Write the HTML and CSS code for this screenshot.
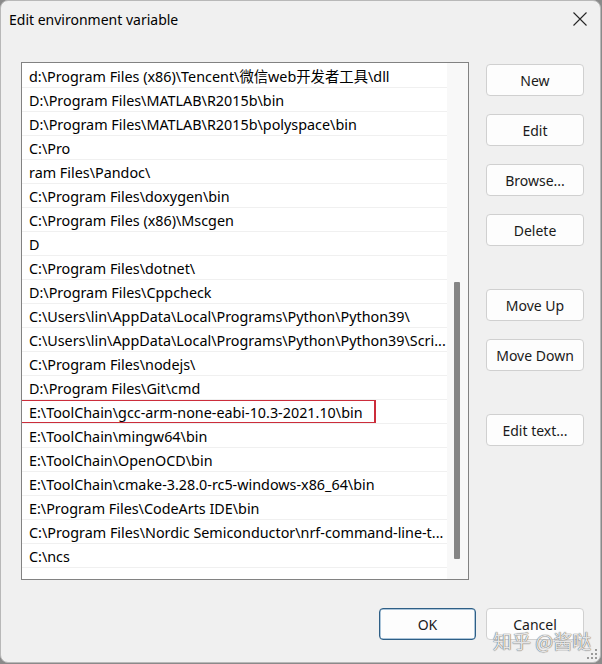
FILE: index.html
```html
<!DOCTYPE html>
<html>
<head>
<meta charset="utf-8">
<link rel="stylesheet" href="styles.css">
</head>
<body>
<div class="window">
  <div class="titlebar">
    <span class="title">Edit environment variable</span>
    <svg class="close" width="14" height="14" viewBox="0 0 14 14"><path d="M0.5 0.5 L13.5 13.5 M13.5 0.5 L0.5 13.5" stroke="#262626" stroke-width="1.1" fill="none"/></svg>
  </div>
  <div class="content">
    <div class="main">
      <div class="listbox">
        <div class="rows">
          <div class="row">d:\Program Files (x86)\Tencent\微信web开发者工具\dll</div>
          <div class="row">D:\Program Files\MATLAB\R2015b\bin</div>
          <div class="row">D:\Program Files\MATLAB\R2015b\polyspace\bin</div>
          <div class="row">C:\Pro</div>
          <div class="row">ram Files\Pandoc\</div>
          <div class="row">C:\Program Files\doxygen\bin</div>
          <div class="row">C:\Program Files (x86)\Mscgen</div>
          <div class="row">D</div>
          <div class="row">C:\Program Files\dotnet\</div>
          <div class="row">D:\Program Files\Cppcheck</div>
          <div class="row">C:\Users\lin\AppData\Local\Programs\Python\Python39\</div>
          <div class="row">C:\Users\lin\AppData\Local\Programs\Python\Python39\Scri...</div>
          <div class="row">C:\Program Files\nodejs\</div>
          <div class="row">D:\Program Files\Git\cmd</div>
          <div class="row marked">E:\ToolChain\gcc-arm-none-eabi-10.3-2021.10\bin</div>
          <div class="row">E:\ToolChain\mingw64\bin</div>
          <div class="row">E:\ToolChain\OpenOCD\bin</div>
          <div class="row">E:\ToolChain\cmake-3.28.0-rc5-windows-x86_64\bin</div>
          <div class="row">E:\Program Files\CodeArts IDE\bin</div>
          <div class="row">C:\Program Files\Nordic Semiconductor\nrf-command-line-t...</div>
          <div class="row">C:\ncs</div>
          <div class="row empty"></div>
        </div>
        <div class="scrollbar"><div class="thumb"></div></div>
      </div>
      <div class="buttons">
        <div class="btn">New</div>
        <div class="btn">Edit</div>
        <div class="btn">Browse...</div>
        <div class="btn">Delete</div>
        <div class="btn group">Move Up</div>
        <div class="btn">Move Down</div>
        <div class="btn group">Edit text...</div>
      </div>
    </div>
    <div class="footer">
      <div class="btn default">OK</div>
      <div class="btn">Cancel</div>
    </div>
  </div>
  <div class="watermark">知乎 @酱哒</div>
  <svg class="grip" width="12" height="12" viewBox="0 0 12 12">
    <g fill="#9a9a9a">
      <rect x="9" y="1" width="2" height="2"/>
      <rect x="5" y="5" width="2" height="2"/><rect x="9" y="5" width="2" height="2"/>
      <rect x="1" y="9" width="2" height="2"/><rect x="5" y="9" width="2" height="2"/><rect x="9" y="9" width="2" height="2"/>
    </g>
  </svg>
</div>
</body>
</html>
```
FILE: styles.css
```css
html, body {
  margin: 0;
  padding: 0;
  background: #8a8a8a;
}
body {
  width: 602px;
  height: 664px;
  overflow: hidden;
  font-family: "Segoe UI", "Noto Sans", "Noto Sans CJK SC", sans-serif;
  color: #000;
}
.window {
  position: relative;
  box-sizing: border-box;
  width: 601px;
  height: 663px;
  background: #f0f0f0;
  border: 1px solid #b8b8b8;
  border-radius: 8px;
}
.titlebar {
  height: 38px;
  display: flex;
  align-items: center;
  justify-content: space-between;
  padding: 0 13px 0 8px;
}
.title {
  font-size: 14px;
  color: #000;
  margin-top: -1px;
}
.close {
  display: block;
  margin-top: -2px;
}
.content {
  padding: 23px 16px 0 20px;
}
.main {
  display: flex;
  gap: 17px;
}
.listbox {
  box-sizing: border-box;
  width: 448px;
  height: 518px;
  border: 1px solid #828282;
  background: #fff;
  display: flex;
  overflow: hidden;
}
.rows {
  width: 425px;
  padding-top: 1px;
}
.row {
  box-sizing: border-box;
  height: 24px;
  padding-top: 3px;
  line-height: 20px;
  padding-left: 7px;
  border-bottom: 1px solid #f0f0f0;
  font-size: 14.35px;
  white-space: nowrap;
  overflow: hidden;
  position: relative;
}
.row.marked::after {
  content: "";
  position: absolute;
  left: -3px;
  top: -1px;
  width: 357px;
  height: 25px;
  box-sizing: border-box;
  border: 2px solid #cc2d3b;
}
.row.empty {
  border-bottom: none;
}
.scrollbar {
  flex: 1;
  background: #f8f8f8;
  padding-top: 219px;
  padding-left: 7px;
}
.thumb {
  width: 6px;
  height: 277px;
  background: #858585;
  border-radius: 1px;
}
.buttons {
  display: flex;
  flex-direction: column;
  gap: 18px;
  padding-top: 2px;
}
.btn {
  box-sizing: border-box;
  width: 98px;
  height: 32px;
  border: 1px solid #d0d0d0;
  border-radius: 4px;
  background: #fdfdfd;
  font-size: 14px;
  line-height: 31px;
  text-align: center;
  color: #1a1a1a;
}
.btn.group {
  margin-top: 25px;
}
.footer {
  display: flex;
  justify-content: flex-end;
  gap: 10px;
  padding-top: 28px;
}
.btn.default {
  width: 97px;
  border: 1px solid #2e5f86;
  box-shadow: inset 0 0 0 0.5px #5a8cb5;
}
.watermark {
  position: absolute;
  left: 492px;
  top: 626px;
  font-family: "Noto Sans CJK SC", sans-serif;
  font-size: 19px;
  color: rgba(255, 255, 255, 0.85);
  text-shadow: 0 0 1px #555, 0 0 1px #777;
}
.grip {
  position: absolute;
  right: 2px;
  bottom: 2px;
}
```
